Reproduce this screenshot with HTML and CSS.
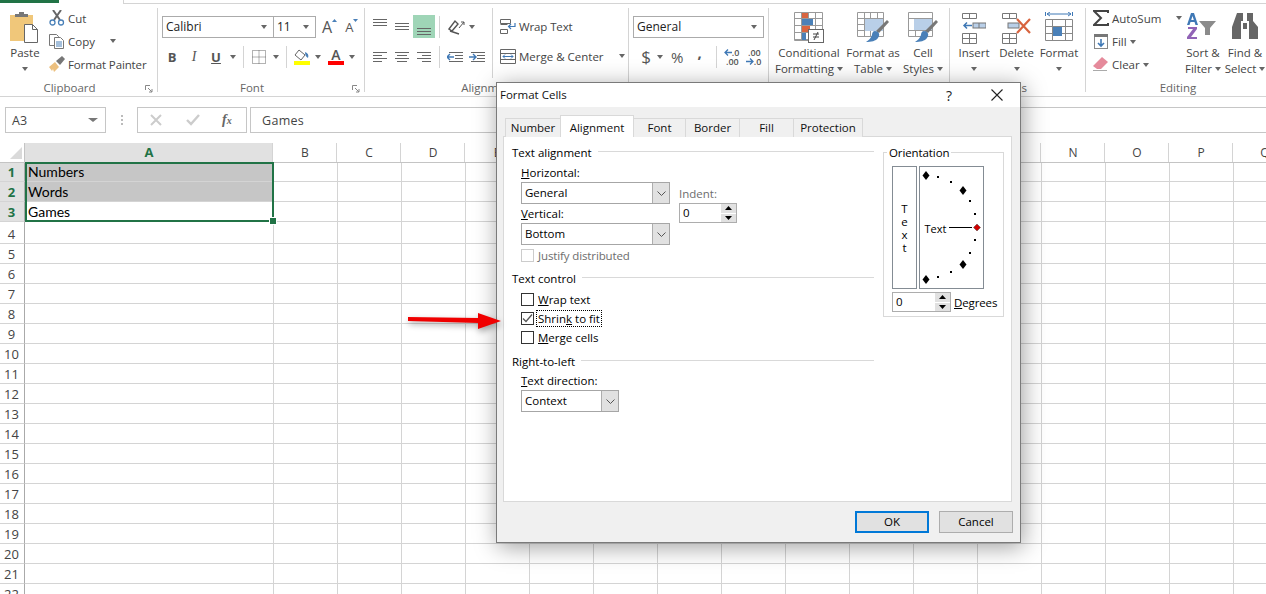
FILE: index.html
```html
<!DOCTYPE html>
<html lang="en">
<head>
<meta charset="utf-8">
<title>Format Cells</title>
<link rel="stylesheet" href="styles.css">
</head>
<body>
<div class="app">
  <div class="tabstrip"><div class="filetab"></div><div class="hometab"></div><div class="tabrest"></div></div>
  <div class="ribbon">
    <section class="group g1">
      <div class="body">
        <div class="big w34">
          <svg width="32" height="32" viewBox="0 0 32 32"><rect x="1" y="3" width="23" height="26" fill="#f0c77a"/><path d="M6 5V2h4V0h5v2h4v3z" fill="#777"/><path d="M15.500 12.500h8l5 5v13h-13z" fill="#fff" stroke="#666"/><path d="M23.500 12.500v5h5" fill="none" stroke="#666"/></svg>
          <span class="lbl">Paste</span><span class="caret solo"></span>
        </div>
        <div class="stack">
          <div class="item"><svg width="16" height="16" viewBox="0 0 16 16"><path d="M4 0l7 10M12 0L5 10" stroke="#666" stroke-width="2" fill="none"/><circle cx="3.500" cy="12.500" r="2.500" fill="none" stroke="#4a80b8" stroke-width="1.300"/><circle cx="12" cy="12.500" r="2.500" fill="none" stroke="#4a80b8" stroke-width="1.300"/></svg><span>Cut</span></div>
          <div class="item mt3"><svg width="16" height="15" viewBox="0 0 16 15"><path d="M.5.500h7l2 2v9h-9z" fill="#fff" stroke="#777"/><path d="M5.500 3.500h6l3 3v8h-9z" fill="#fff" stroke="#777"/><path d="M7 8h6M7 10h6M7 12h6" stroke="#4a80b8"/></svg><span>Copy</span><span class="caret ml12"></span></div>
          <div class="item mt3"><svg width="16" height="16" viewBox="0 0 16 16"><path d="M0 11l6-5 4 5-5 5-1-3-1 2z" fill="#ecc07f"/><path d="M7 5l6-5 3 3-5 6z" fill="#777"/></svg><span class="tight">Format Painter</span></div>
        </div>
      </div>
      <div class="foot">Clipboard<svg class="launch" width="8" height="8" viewBox="0 0 8 8"><path d="M.5 5V.5H5M3 3l4 4M4 7h3V4" fill="none" stroke="#888"/></svg></div>
    </section>

    <section class="group g2">
      <div class="body col">
        <div class="rowline r1">
          <div class="combo w111"><span>Calibri</span><span class="caret"></span></div>
          <div class="combo w43"><span>11</span><span class="caret"></span></div>
          <span class="letter-a grow">A<svg width="5" height="3" viewBox="0 0 5 3"><path d="M0 3l2.500-3L5 3z" fill="#4a80b8"/></svg></span>
          <span class="letter-a shrink">A<svg width="5" height="3" viewBox="0 0 5 3"><path d="M0 0l2.500 3L5 0z" fill="#4a80b8"/></svg></span>
        </div>
        <div class="rowline r2 fontrow">
          <b class="fmt">B</b><i class="fmt">I</i><u class="fmt under">U</u><span class="caret"></span>
          <span class="vsep m1"></span>
          <svg class="m2" width="14" height="14" viewBox="0 0 14 14"><path d="M.5.500h13v13H.5zM7 .5v13M.5 7h13" fill="none" stroke="#666" stroke-dasharray="1 1"/></svg><span class="caret m3"></span>
          <span class="vsep m4"></span>
          <span class="colorbtn m5"><svg width="16" height="12" viewBox="0 0 16 12"><path d="M5 1l6 5-4 5-6-5z" fill="#fff" stroke="#666"/><path d="M5 1l1-1M11 3c3 1 4 3 3 6-2-1-3-3-3-6z" fill="#4a80b8"/></svg><span class="swatch yellow"></span></span><span class="caret m6"></span>
          <span class="colorbtn m7"><span class="colora">A</span><span class="swatch red"></span></span><span class="caret m6"></span>
        </div>
      </div>
      <div class="foot">Font<svg class="launch" width="8" height="8" viewBox="0 0 8 8"><path d="M.5 5V.5H5M3 3l4 4M4 7h3V4" fill="none" stroke="#888"/></svg></div>
    </section>

    <section class="group g3">
      <div class="body">
        <div class="alignleft">
          <div class="rowline r1">
            <span class="cell22 hi"><svg width="14" height="7" viewBox="0 0 14 7"><path d="M0 .5h14M0 3.500h14M0 6.500h14" stroke="#666"/></svg></span>
            <span class="cell22"><svg width="14" height="7" viewBox="0 0 14 7"><path d="M0 .5h14M0 3.500h14M0 6.500h14" stroke="#666"/></svg></span>
            <span class="cell22 active"><svg width="14" height="7" viewBox="0 0 14 7"><path d="M0 .5h14M0 3.500h14M0 6.500h14" stroke="#666"/></svg></span>
            <span class="vsep s1"></span>
            <svg class="s2" width="18" height="16" viewBox="0 0 18 16"><path d="M2 10l6-8 3 3-6 7zM3 12l9 3" fill="none" stroke="#555" stroke-width="1.400"/><path d="M12 9l5-6M14 3h3v3" fill="none" stroke="#555"/></svg><span class="caret s3"></span>
          </div>
          <div class="rowline r2">
            <span class="cell22"><svg width="14" height="10" viewBox="0 0 14 10"><path d="M0 .5h14M0 3.500h9M0 6.500h14M0 9.500h9" stroke="#666"/></svg></span>
            <span class="cell22"><svg width="14" height="10" viewBox="0 0 14 10"><path d="M0 .5h14M2 3.500h10M0 6.500h14M2 9.500h10" stroke="#666"/></svg></span>
            <span class="cell22"><svg width="14" height="10" viewBox="0 0 14 10"><path d="M0 .5h14M5 3.500h9M0 6.500h14M5 9.500h9" stroke="#666"/></svg></span>
            <span class="vsep s1"></span>
            <svg class="s2" width="16" height="10" viewBox="0 0 16 10"><path d="M2 .5h14M8 3.500h8M8 6.500h8M2 9.500h14" stroke="#666"/><path d="M0 5h7M3 2L0 5l3 3" fill="none" stroke="#3f78b5" stroke-width="1.400"/></svg>
            <svg class="s4" width="16" height="10" viewBox="0 0 16 10"><path d="M2 .5h14M8 3.500h8M8 6.500h8M2 9.500h14" stroke="#666"/><path d="M0 5h7M4 2l3 3-3 3" fill="none" stroke="#3f78b5" stroke-width="1.400"/></svg>
          </div>
        </div>
        <div class="alignright">
          <div class="item rw"><svg width="16" height="15" viewBox="0 0 16 15"><path d="M.5.500h10v4H.5zM.5 10.500h7v4h-7zM.5 5.500h7" fill="none" stroke="#666"/><path d="M15 4v3.500H9M11 5L8.500 7.500 11 10" fill="none" stroke="#3f78b5" stroke-width="1.200"/></svg><span class="tight">Wrap Text</span></div>
          <div class="item rm"><svg width="16" height="15" viewBox="0 0 16 15"><path d="M.5.500h15v14H.5zM.5 4.500h15M.5 10.500h15" fill="none" stroke="#666"/><path d="M3 7.500h10M5 5.500l-2 2 2 2M11 5.500l2 2-2 2" fill="none" stroke="#3f78b5"/></svg><span>Merge &amp; Center</span><span class="caret ml12"></span></div>
        </div>
      </div>
      <div class="foot alignfoot">Alignment</div>
    </section>

    <section class="group g4">
      <div class="body col">
        <div class="rowline r1"><div class="combo w131"><span>General</span><span class="caret"></span></div></div>
        <div class="rowline r2 numrow">
          <span class="sym dollar">$</span><span class="caret n1"></span><span class="sym pct">%</span><span class="sym comma">,</span>
          <span class="vsep n2"></span>
          <span class="dec n3"><svg width="8" height="7" viewBox="0 0 8 7"><path d="M1 3.500h7M4 .5L1 3.500l3 3" fill="none" stroke="#3f78b5" stroke-width="1.300"/></svg><small class="d1">.0</small><small class="d2">.00</small></span>
          <span class="dec n4"><small class="d1">.00</small><svg width="8" height="7" viewBox="0 0 8 7"><path d="M0 3.500h7M4 .5l3 3-3 3" fill="none" stroke="#3f78b5" stroke-width="1.300"/></svg><small class="d2">.0</small></span>
        </div>
      </div>
      <div class="foot">Number</div>
    </section>

    <section class="group g5">
      <div class="body">
        <div class="big w68">
          <svg width="30" height="32" viewBox="0 0 30 32"><path d="M.5.500h28v28H.5zM7.500.5v28M14.500.5v20M21.500.5v20M.5 6.500h28M.5 13.500h28M.5 20.500h14M.5 27.500h14" fill="none" stroke="#999"/><rect x="8" y="1" width="6" height="5" fill="#d8643f"/><rect x="8" y="7" width="11" height="6" fill="#4a80b8"/><rect x="8" y="14" width="8" height="6" fill="#d8643f"/><rect x="8" y="21" width="4" height="7" fill="#4a80b8"/><rect x="14.500" y="17.500" width="15" height="13" fill="#fff" stroke="#666"/><path d="M19 22h6M19 25h6M24 20l-4 8" stroke="#444" fill="none"/></svg>
          <span class="lbl">Conditional</span><span class="lbl">Formatting<span class="caret in"></span></span>
        </div>
        <div class="big w60">
          <svg width="32" height="32" viewBox="0 0 32 32"><path d="M.5.500h26v24H.5zM7.500.5v24M13.500.5v24M20.500.5v24M.5 6.500h26M.5 12.500h26M.5 18.500h26" fill="none" stroke="#999"/><rect x="8" y="7" width="18" height="12" fill="#b9cfe8"/><path d="M30 8l2 2-10 11-3-2z" fill="#777"/><path d="M18 19c3 0 6 3 3 7-2 3-7 4-12 4 3-2 5-4 6-7 0-2 1-4 3-4z" fill="#4a80b8"/></svg>
          <span class="lbl">Format as</span><span class="lbl">Table<span class="caret in"></span></span>
        </div>
        <div class="big w40">
          <svg width="30" height="32" viewBox="0 0 30 32"><path d="M.5.500h24v24H.5zM7.500 18.500v6M17.500 18.500v6M.5 6.500h24M.5 18.500h24" fill="none" stroke="#999"/><rect x="6" y="7" width="18" height="11" fill="#b9cfe8"/><path d="M28 8l2 2-10 11-3-2z" fill="#777"/><path d="M16 19c3 0 6 3 3 7-2 3-7 4-12 4 3-2 5-4 6-7 0-2 1-4 3-4z" fill="#4a80b8"/></svg>
          <span class="lbl">Cell</span><span class="lbl">Styles<span class="caret in"></span></span>
        </div>
      </div>
      <div class="foot">Styles</div>
    </section>

    <section class="group g6">
      <div class="body">
        <div class="big w42">
          <svg width="24" height="32" viewBox="0 0 24 32"><path d="M.5 1.500h14v5H.5zM7.500 1.500v5M.5 21.500h14v10H.5zM7.500 21.500v10M.5 26.500h14" fill="none" stroke="#777"/><rect x="11" y="11" width="13" height="5" fill="#b9cfe8" stroke="#777"/><path d="M17 11v5" stroke="#777"/><path d="M10 13.500H2M5 10.500l-3 3 3 3" fill="none" stroke="#3f78b5" stroke-width="1.500"/></svg>
          <span class="lbl">Insert</span><span class="caret solo"></span>
        </div>
        <div class="big w43">
          <svg width="30" height="32" viewBox="0 0 30 32"><path d="M.5 1.500h14v5H.5zM7.500 1.500v5M.5 21.500h14v10H.5zM7.500 21.500v10M.5 26.500h14" fill="none" stroke="#777"/><rect x="6" y="11" width="11" height="5" fill="#b9cfe8" stroke="#777"/><path d="M15 7l13 14M28 7L15 21" stroke="#d8643f" stroke-width="2.200" fill="none"/></svg>
          <span class="lbl">Delete</span><span class="caret solo"></span>
        </div>
        <div class="big w42">
          <svg width="28" height="32" viewBox="0 0 28 32"><path d="M.5 0v4M27.500 0v4M2 2h24M5 0L2 2l3 2M23 0l3 2-3 2" fill="none" stroke="#3f78b5"/><path d="M.5 7.500h27v21H.5zM7.500 7.500v21M20.500 7.500v21M.5 14.500h27M.5 21.500h27" fill="none" stroke="#888"/><rect x="8" y="15" width="9" height="9" fill="#4a80b8"/></svg>
          <span class="lbl">Format</span><span class="caret solo"></span>
        </div>
      </div>
      <div class="foot">Cells</div>
    </section>

    <section class="group g7">
      <div class="body">
        <div class="stack s89">
          <div class="item"><svg width="16" height="16" viewBox="0 0 16 16"><path d="M15 3V1H1l7 7-7 7h14v-2" fill="none" stroke="#444" stroke-width="2"/></svg><span>AutoSum</span><span class="caret ml12"></span></div>
          <div class="item mt3"><svg width="16" height="15" viewBox="0 0 16 15"><rect x="1.500" y=".5" width="13" height="14" fill="#fff" stroke="#888"/><rect x="1" y="0" width="14" height="3" fill="#777"/><path d="M8 5v7M5 9l3 3 3-3" fill="none" stroke="#3f78b5" stroke-width="1.600"/></svg><span>Fill<span class="caret in"></span></span></div>
          <div class="item mt3"><svg width="16" height="14" viewBox="0 0 16 14"><path d="M9 0l6 5-7 7H4L0 9z" fill="#e58a9b"/><path d="M0 13.500h14" stroke="#aaa"/></svg><span>Clear<span class="caret in"></span></span></div>
        </div>
        <div class="big w42">
          <svg width="32" height="32" viewBox="0 0 32 32"><path fill-rule="evenodd" d="M0 13L4 1h3l4 12H8.500l-1-3h-4l-1 3zM4.200 8h2.600L5.500 4z" fill="#3f78b5"/><path d="M1 15h9v2l-6 8h6v2H0v-2l6-8H1z" fill="#9163b6"/><path d="M12 9h17l-6 7v7h-5v-7z" fill="#8b8b8b"/></svg>
          <span class="lbl">Sort &amp;</span><span class="lbl">Filter<span class="caret in"></span></span>
        </div>
        <div class="big w42">
          <svg width="26" height="32" viewBox="0 0 26 32"><path d="M5 1h6v8H9v18H0V15zM15 1h6v8l5 6v12h-9V9h-2zM11 11h4v6h-4z" fill="#666"/></svg>
          <span class="lbl">Find &amp;</span><span class="lbl">Select<span class="caret in"></span></span>
        </div>
      </div>
      <div class="foot editfoot">Editing</div>
    </section>
  </div>

  <div class="formula">
    <div class="namebox"><span>A3</span><span class="caret big-caret"></span></div>
    <span class="dots"></span>
    <div class="fxbox">
      <svg width="12" height="12" viewBox="0 0 12 12"><path d="M1 1l10 10M11 1L1 11" stroke="#ccc" stroke-width="2"/></svg>
      <svg width="14" height="12" viewBox="0 0 14 12"><path d="M1 6l4 4 8-9" fill="none" stroke="#ccc" stroke-width="2.400"/></svg>
      <span class="fx">f<small>x</small></span>
    </div>
    <div class="fxinput">Games</div>
  </div>

  <div class="sheet">
    <div class="colhead">
      <div class="corner"><svg width="12" height="12" viewBox="0 0 12 12"><path d="M12 0v12H0z" fill="#dadada"/></svg></div>
      <div class="ch cha">A</div><div class="ch">B</div><div class="ch">C</div><div class="ch">D</div><div class="ch">E</div><div class="ch">F</div><div class="ch">G</div><div class="ch">H</div><div class="ch">I</div><div class="ch">J</div><div class="ch">K</div><div class="ch">L</div><div class="ch">M</div><div class="ch">N</div><div class="ch">O</div><div class="ch">P</div><div class="ch">Q</div>
    </div>
    <div class="row"><div class="rh on">1</div><div class="cells"><div class="a gray">Numbers</div></div></div>
    <div class="row"><div class="rh on">2</div><div class="cells"><div class="a gray">Words</div></div></div>
    <div class="row"><div class="rh on">3</div><div class="cells"><div class="a">Games</div></div></div>
    <div class="row tall"><div class="rh">4</div><div class="cells"><div class="a"></div></div></div>
    <div class="row"><div class="rh">5</div><div class="cells"><div class="a"></div></div></div>
    <div class="row"><div class="rh">6</div><div class="cells"><div class="a"></div></div></div>
    <div class="row"><div class="rh">7</div><div class="cells"><div class="a"></div></div></div>
    <div class="row"><div class="rh">8</div><div class="cells"><div class="a"></div></div></div>
    <div class="row"><div class="rh">9</div><div class="cells"><div class="a"></div></div></div>
    <div class="row"><div class="rh">10</div><div class="cells"><div class="a"></div></div></div>
    <div class="row"><div class="rh">11</div><div class="cells"><div class="a"></div></div></div>
    <div class="row"><div class="rh">12</div><div class="cells"><div class="a"></div></div></div>
    <div class="row"><div class="rh">13</div><div class="cells"><div class="a"></div></div></div>
    <div class="row"><div class="rh">14</div><div class="cells"><div class="a"></div></div></div>
    <div class="row"><div class="rh">15</div><div class="cells"><div class="a"></div></div></div>
    <div class="row"><div class="rh">16</div><div class="cells"><div class="a"></div></div></div>
    <div class="row"><div class="rh">17</div><div class="cells"><div class="a"></div></div></div>
    <div class="row"><div class="rh">18</div><div class="cells"><div class="a"></div></div></div>
    <div class="row"><div class="rh">19</div><div class="cells"><div class="a"></div></div></div>
    <div class="row"><div class="rh">20</div><div class="cells"><div class="a"></div></div></div>
    <div class="row"><div class="rh">21</div><div class="cells"><div class="a"></div></div></div>
    <div class="row"><div class="rh">22</div><div class="cells"><div class="a"></div></div></div>
    <div class="selection"><span class="handle"></span></div>
  </div>

  <div class="dialog">
    <div class="dtitle"><span class="dname">Format Cells</span><span class="help">?</span><svg class="close" width="12" height="12" viewBox="0 0 12 12"><path d="M.5.5l11 11M11.500.5l-11 11" stroke="#222" stroke-width="1.100"/></svg></div>
    <div class="dbody">
      <div class="tabs">
        <div class="tab t1">Number</div><div class="tab t2 current">Alignment</div><div class="tab t3">Font</div><div class="tab t4">Border</div><div class="tab t5">Fill</div><div class="tab t6">Protection</div>
      </div>
      <div class="panel">
        <div class="leftcol">
          <div class="sec first"><span>Text alignment</span><i></i></div>
          <div class="ta">
            <div class="ta-left">
              <div class="flabel"><u>H</u>orizontal:</div>
              <div class="dd w149"><span>General</span><span class="ddbtn"><svg width="9" height="5" viewBox="0 0 9 5"><path d="M.5.5l4 4 4-4" fill="none" stroke="#555"/></svg></span></div>
              <div class="flabel vlab"><u>V</u>ertical:</div>
              <div class="dd w149"><span>Bottom</span><span class="ddbtn"><svg width="9" height="5" viewBox="0 0 9 5"><path d="M.5.5l4 4 4-4" fill="none" stroke="#555"/></svg></span></div>
            </div>
            <div class="ta-right">
              <div class="flabel dis nomargin">Indent:</div>
              <div class="spin w58"><span>0</span><span class="spinbtns"><b><svg width="7" height="4" viewBox="0 0 7 4"><path d="M0 4l3.500-4L7 4z" fill="#000"/></svg></b><b><svg width="7" height="4" viewBox="0 0 7 4"><path d="M0 0l3.500 4L7 0z" fill="#000"/></svg></b></span></div>
            </div>
          </div>
          <div class="check justify"><span class="box disbox"></span><span class="dis tight">Justify distributed</span></div>
          <div class="sec tc"><span>Text control</span><i></i></div>
          <div class="checks">
            <div class="check"><span class="box"></span><span><u>W</u>rap text</span></div>
            <div class="check"><span class="box"><svg width="11" height="9" viewBox="0 0 11 9"><path d="M1 4.500l3 3 6-7" fill="none" stroke="#555" stroke-width="1.300"/></svg></span><span class="focus">Shrin<u>k</u> to fit</span></div>
            <div class="check"><span class="box"></span><span><u>M</u>erge cells</span></div>
          </div>
          <div class="sec rtl"><span>Right-to-left</span><i></i></div>
          <div class="flabel td"><u>T</u>ext direction:</div>
          <div class="dd w98"><span>Context</span><span class="ddbtn"><svg width="9" height="5" viewBox="0 0 9 5"><path d="M.5.5l4 4 4-4" fill="none" stroke="#555"/></svg></span></div>
        </div>
        <div class="orient">
          <div class="olabel">Orientation</div>
          <div class="odials">
            <div class="vtext"><span>T</span><span>e</span><span>x</span><span>t</span></div>
            <svg class="dial" width="65" height="123" viewBox="0 0 65 123">
              <rect x=".5" y=".5" width="64" height="122" fill="#fff" stroke="#848c94"/>
              <g fill="#000">
                <path d="M7 5l3.500 4.500L7 14l-3.500-4.500z"/><path d="M44 20l3.500 4.500L44 29l-3.500-4.500z"/><path d="M44 94l3.500 4.500L44 103l-3.500-4.500z"/><path d="M7 109l3.500 4.500L7 118l-3.500-4.500z"/>
                <rect x="18" y="10" width="2" height="2"/><rect x="31" y="15" width="2" height="2"/><rect x="50" y="34" width="2" height="2"/><rect x="55" y="47" width="2" height="2"/><rect x="55" y="73" width="2" height="2"/><rect x="50" y="86" width="2" height="2"/><rect x="31" y="105" width="2" height="2"/><rect x="18" y="110" width="2" height="2"/>
              </g>
              <path d="M30 61.500h23" stroke="#000"/>
              <path d="M58 58l3.500 3.500L58 65l-3.500-3.500z" fill="#d00000" stroke="#444" stroke-width=".5"/>
              <text x="5.500" y="66.500" class="dialtext">Text</text>
            </svg>
          </div>
          <div class="degrow">
            <div class="spin w59"><span>0</span><span class="spinbtns"><b><svg width="7" height="4" viewBox="0 0 7 4"><path d="M0 4l3.500-4L7 4z" fill="#000"/></svg></b><b><svg width="7" height="4" viewBox="0 0 7 4"><path d="M0 0l3.500 4L7 0z" fill="#000"/></svg></b></span></div>
            <span class="deg tight"><u>D</u>egrees</span>
          </div>
        </div>
      </div>
      <div class="dfoot"><div class="btn ok">OK</div><div class="btn">Cancel</div></div>
    </div>
  </div>

  <svg class="arrow" width="104" height="30" viewBox="0 0 104 30"><path d="M4 13l70 1V9l23 8-23 8v-6L4 17z" fill="#f00000"/></svg>
</div>
</body>
</html>
```
FILE: styles.css
```css
* { box-sizing: border-box; }
html, body { margin: 0; padding: 0; background: #fff; }
body { width: 1266px; height: 594px; overflow: hidden; font-family: "Open Sans", "Noto Sans", sans-serif; font-size: 11.5px; color: #444; }
.app { position: relative; width: 1266px; height: 594px; overflow: hidden; }
svg { display: block; flex: none; }
u { text-underline-offset: 1px; }
.tight { letter-spacing: -.12px; }

.tabstrip { display: flex; height: 4px; }
.filetab { width: 59px; height: 3px; background: #217346; }
.hometab { width: 65px; height: 4px; border-right: 1px solid #d4d4d4; }
.tabrest { flex: 1; border-bottom: 1px solid #d4d4d4; }

.ribbon { display: flex; height: 93px; padding-top: 4px; border-bottom: 1px solid #d4d4d4; }
.group { height: 84px; border-right: 1px solid #d4d4d4; display: flex; flex-direction: column; flex: none; }
.g1 { width: 158px; } .g2 { width: 207px; } .g3 { width: 264px; } .g4 { width: 140px; } .g5 { width: 181px; } .g6 { width: 136px; } .g7 { width: 180px; border-right: 0; }
.body { height: 72px; display: flex; flex: none; }
.col { flex-direction: column; }
.foot { position: relative; height: 16px; line-height: 16px; text-align: center; color: #666; font-size: 11.5px; flex: none; }
.launch { position: absolute; right: 4px; top: 5px; }
.g1 .foot { padding-right: 18px; }
.g2 .foot { padding-right: 18px; }
.g6 .foot { padding-right: 6px; }
.editfoot { padding-left: 4px; }

.caret { display: inline-block; width: 0; height: 0; border: 3.500px solid transparent; border-top: 4px solid #666; border-bottom: 0; flex: none; }
.caret.in { margin-left: 3px; vertical-align: 2px; }
.caret.solo { margin-top: 6px; }
.ml12 { margin-left: 12px; }

.big { display: flex; flex-direction: column; align-items: center; padding-top: 4px; flex: none; }
.big > svg { height: 32px; margin-bottom: 1px; }
.lbl { line-height: 16px; white-space: nowrap; }
.w34 { width: 34px; margin-left: 8px; } .w68 { width: 68px; } .w60 { width: 60px; } .w40 { width: 40px; } .w42 { width: 42px; } .w43 { width: 43px; }
.g5 .body { padding-left: 6px; }
.g6 .body { padding-left: 3px; }

.stack { margin-left: 7px; flex: none; }
.s89 { width: 89px; margin-left: 7px; }
.item { display: flex; align-items: center; gap: 3px; height: 20px; white-space: nowrap; }
.mt3 { margin-top: 3px; }

.rowline { display: flex; align-items: center; }
.r1 { height: 23px; margin-top: 7px; flex: none; }
.r2 { height: 23px; margin-top: 7px; flex: none; }
.g2 .body { padding-left: 4px; }
.g4 .body { padding-left: 4px; }
.combo { height: 22px; border: 1px solid #ababab; display: flex; align-items: center; justify-content: space-between; padding: 0 6px 0 3px; color: #222; font-size: 12px; }
.w111 { width: 111px; border-right: 0; }
.combo.w43 { width: 43px; }
.w131 { width: 131px; }
.letter-a { display: flex; color: #555; font-size: 16px; line-height: 20px; }
.letter-a svg { margin-top: 2px; }
.grow { margin-left: 6px; }
.shrink { margin-left: 8px; font-size: 13px; }

.fontrow .fmt { width: 22px; text-align: center; color: #555; font-family: "Liberation Serif", serif; font-size: 14px; text-decoration: none; }
.fontrow .fmt:first-child { font-family: "Open Sans", sans-serif; font-size: 13px; font-weight: 700; margin-left: -1px; }
.fontrow .under { font-family: "Open Sans", sans-serif; font-size: 13px; font-weight: 700; text-decoration: underline; }
.vsep { display: block; width: 1px; height: 22px; background: #d4d4d4; flex: none; }
.fontrow .caret { margin-left: 3px; }
.m1 { margin-left: 7px; } .m2 { margin-left: 8px; } .fontrow .m3 { margin-left: 7px; } .m4 { margin-left: 7px; } .m5 { margin-left: 7px; } .fontrow .m6 { margin-left: 5px; } .m7 { margin-left: 7px; }
.colorbtn { display: flex; flex-direction: column; align-items: center; width: 16px; }
.swatch { display: block; width: 16px; height: 4px; }
.yellow { background: #ffff00; } .red { background: #ff0000; }
.colora { color: #555; font-size: 14px; font-weight: 600; line-height: 12px; height: 12px; }

.alignleft { width: 128px; height: 70px; padding-left: 4px; border-right: 1px solid #d4d4d4; flex: none; }
.alignright { padding-left: 7px; }
.cell22 { width: 22px; height: 23px; display: flex; align-items: center; justify-content: center; flex: none; }
.hi svg { margin-top: -8px; }
.active { background: #9fd5b7; }
.active svg { margin-top: 9px; }
.s1 { margin-left: 4px; } .s2 { margin-left: 7px; } .s3 { margin-left: 4px; } .s4 { margin-left: 6px; }
.alignright .rw { margin-top: 8px; height: 20px; }
.alignright .rm { margin-top: 10px; height: 20px; }
.alignfoot { padding-right: 16px; }

.numrow .sym { color: #555; }
.dollar { font-size: 17px; margin-left: 7px; line-height: 20px; width: 12px; text-align: center; }
.n1 { margin-left: 5px; } .pct { font-size: 15px; margin-left: 8px; } .comma { font-size: 15px; font-weight: 700; margin: -10px 0 0 14px; line-height: 12px; }
.n2 { margin-left: 14px; } .n3 { margin-left: 7px; } .n4 { margin-left: 7px; }
.dec { width: 15px; height: 18px; display: grid; grid-template-columns: 8px 7px; grid-template-rows: 9px 9px; font-size: 8px; line-height: 9px; color: #555; align-items: center; flex: none; }
.dec small { font-size: 9px; font-weight: 600; }
.n3 .d2 { grid-column: 1 / 3; text-align: right; }
.n4 .d1 { grid-column: 1 / 3; text-align: right; }
.n4 .d2 { text-align: left; }
.n3 .d1 { text-align: right; }

.formula { display: flex; height: 26px; margin-top: 10px; padding-left: 5px; align-items: stretch; }
.namebox { width: 101px; border: 1px solid #c6c6c6; display: flex; align-items: center; justify-content: space-between; padding: 0 7px 0 6px; font-size: 12.500px; flex: none; }
.big-caret { border-width: 4px 5px 0; border-top-color: #777; }
.dots { width: 2px; margin: 8px 14px 8px 15px; background: repeating-linear-gradient(#bbb 0 2px, transparent 2px 4px); flex: none; }
.fxbox { width: 110px; flex: none; border: 1px solid #c6c6c6; display: flex; align-items: center; padding-left: 12px; gap: 24px; }
.fx { font-family: "Liberation Serif", serif; font-style: italic; font-weight: 700; color: #666; font-size: 14px; margin-left: -2px; }
.fx small { font-size: 10px; }
.fxinput { flex: 1; margin-left: 3px; margin-right: -2px; border: 1px solid #c6c6c6; padding: 1px 0 0 11px; line-height: 24px; font-size: 12.500px; letter-spacing: .3px; }

.sheet { position: relative; margin-top: 10px; }
.colhead { display: flex; height: 20px; border-bottom: 1px solid #c4c4c4; }
.corner { width: 25px; flex: none; padding: 4px 0 0 10px; border-right: 1px solid #c4c4c4; background: #fff; }
.ch { width: 64px; flex: none; border-right: 1px solid #d4d4d4; text-align: center; line-height: 19px; font-size: 12px; color: #444; padding-left: 1px; }
.cha { width: 248px; background: #e1e1e1; color: #217346; font-weight: 700; font-size: 13px; }
.row { display: flex; height: 20px; }
.row:nth-child(2) { height: 19px; }
.row:nth-child(2) .a { line-height: 18px; }
.row.tall { height: 22px; }
.row.tall .rh { padding-top: 3px; }
.rh { width: 25px; flex: none; border-right: 1px solid #aaa; border-bottom: 1px solid #d4d4d4; display: flex; align-items: center; justify-content: center; font-size: 13px; color: #444; padding: 1px 1px 0 0; }
.rh.on { background: #e1e1e1; color: #217346; font-weight: 700; padding-top: 0; }
.cells { flex: 1; display: flex; border-bottom: 1px solid #d4d4d4; background-image: linear-gradient(90deg, #d4d4d4 1px, transparent 1px); background-size: 64px 100%; background-position: 248px 0; }
.a { width: 248px; flex: none; background: #fff; font-family: Lato, "Liberation Sans", sans-serif; font-size: 14px; line-height: 20px; color: #000; padding-left: 3px; }
.a.gray { background: #c6c6c6; box-shadow: inset 2px 0 #fff, inset -1px 0 #fff; }
.selection { position: absolute; left: 25px; top: 19px; width: 249px; height: 60px; border: 2px solid #217346; }
.handle { position: absolute; right: -4px; bottom: -4px; width: 6px; height: 6px; background: #217346; outline: 1px solid #fff; }

.dialog { position: absolute; left: 496px; top: 82px; width: 525px; height: 461px; border: 1px solid #7a7a7a; background: #f0f0f0; box-shadow: 2px 4px 22px rgba(0, 0, 0, .38); color: #000; font-size: 11.500px; display: flex; flex-direction: column; }
.dtitle { height: 24px; flex: none; background: #fff; display: flex; align-items: center; padding-left: 3px; position: relative; }
.dname { flex: 1; color: #111; margin-top: -1px; }
.help { font-size: 14px; margin-right: 39px; color: #222; }
.close { margin-right: 17px; }
.dbody { flex: 1; padding: 8px 0 0 6px; display: flex; flex-direction: column; }
.tabs { display: flex; height: 22px; margin-bottom: -1px; padding-left: 2px; position: relative; z-index: 1; align-items: flex-end; }
.tab { height: 19px; border: 1px solid #d9d9d9; border-left: 0; border-bottom: 0; background: #f0f0f0; text-align: center; line-height: 18px; color: #111; }
.t1 { width: 56px; border-left: 1px solid #d9d9d9; } .t3 { width: 52px; } .t4 { width: 54px; } .t5 { width: 54px; } .t6 { width: 69px; }
.t2 { width: 74px; }
.current { height: 22px; background: #fff; border-left: 1px solid #d9d9d9; margin-left: -1px; line-height: 18px; padding-top: 3px; }
.panel { width: 509px; height: 366px; background: #fff; border: 1px solid #d9d9d9; display: flex; align-items: flex-start; flex: none; }
.leftcol { width: 370px; padding-left: 8px; flex: none; }
.sec { display: flex; align-items: center; height: 16px; gap: 6px; }
.sec i { flex: 1; height: 1px; background: #d9d9d9; margin-top: -1px; }
.first { margin-top: 7px; }
.ta { display: flex; margin-top: 5px; padding-left: 9px; }
.ta-right { margin-left: 9px; padding-top: 21px; }
.flabel { line-height: 16px; margin-bottom: 1px; }
.vlab { margin-top: 2px; }
.nomargin { margin-bottom: 1px; }
.dis { color: #6d6d6d; }
.dd { height: 22px; border: 1px solid #a6a6a6; display: flex; justify-content: space-between; padding-left: 3px; line-height: 20px; background: #fff; }
.w149 { width: 149px; } .w98 { width: 98px; margin-left: 9px; }
.ddbtn { width: 17px; background: #e1e1e1; border-left: 1px solid #adadad; display: flex; align-items: center; justify-content: center; }
.spin { height: 20px; border: 1px solid #adadad; display: flex; justify-content: space-between; padding-left: 3px; line-height: 18px; }
.w58 { width: 58px; } .w59 { width: 59px; }
.spinbtns { width: 16px; display: flex; flex-direction: column; gap: 1px; border-left: 1px solid #fff; }
.spinbtns b { flex: 1; background: #e1e1e1; display: flex; align-items: center; justify-content: center; }
.check { display: flex; align-items: center; gap: 4px; height: 19px; padding-left: 9px; }
.box { width: 13px; height: 13px; border: 1px solid #333; display: flex; align-items: center; justify-content: center; flex: none; background: #fff; }
.disbox { border-color: #ccc; }
.justify { margin-top: 2px; height: 17px; }
.tc { margin-top: 6px; }
.checks { margin-top: 4px; }
.focus { outline: 1px dotted #000; margin-left: -1px; padding: 0 1px; line-height: 15px; }
.rtl { margin-top: 6px; }
.td { margin: 4px 0 1px 9px; }
.orient { width: 121px; height: 165px; margin: 15px 0 0 9px; border: 1px solid #d9d9d9; padding-left: 8px; flex: none; }
.olabel { margin: -8px 0 0 -5px; width: fit-content; padding: 0 2px; background: #fff; line-height: 16px; letter-spacing: -.1px; }
.odials { display: flex; gap: 2px; margin-top: 5px; }
.vtext { width: 25px; height: 123px; border: 1px solid #848c94; display: flex; flex-direction: column; align-items: center; justify-content: center; line-height: 13px; }
.dialtext { font-family: "Open Sans", sans-serif; font-size: 11px; fill: #000; }
.degrow { display: flex; align-items: center; gap: 3px; margin-top: 3px; }
.dfoot { display: flex; justify-content: flex-end; gap: 10px; padding: 9px 7px 0 0; }
.btn { width: 74px; height: 22px; border: 1px solid #adadad; background: #e1e1e1; text-align: center; line-height: 20px; color: #000; }
.ok { border: 2px solid #0078d7; line-height: 18px; }

.arrow { position: absolute; left: 404px; top: 304px; filter: drop-shadow(1px 3px 3px rgba(0, 0, 0, .35)); }
```
